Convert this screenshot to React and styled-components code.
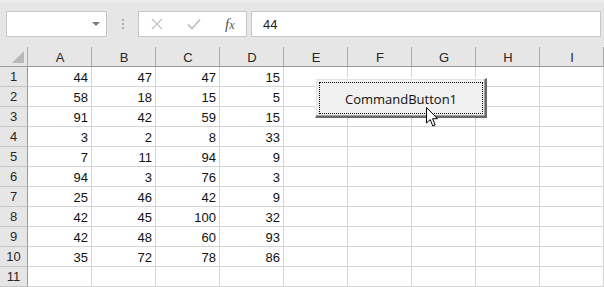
import { styled, createGlobalStyle } from "styled-components";

const GlobalStyle = createGlobalStyle`
  html, body {
    margin: 0;
    padding: 0;
    background: #e6e6e6;
    overflow: hidden;
  }
  body {
    font-family: "Liberation Sans", Arial, sans-serif;
  }
`;

const columns = ["A", "B", "C", "D", "E", "F", "G", "H", "I"];

const data = [
  [44, 47, 47, 15],
  [58, 18, 15, 5],
  [91, 42, 59, 15],
  [3, 2, 8, 33],
  [7, 11, 94, 9],
  [94, 3, 76, 3],
  [25, 46, 42, 9],
  [42, 45, 100, 32],
  [42, 48, 60, 93],
  [35, 72, 78, 86],
  [],
];

export default function App() {
  return (
    <Page>
      <GlobalStyle />
      <FormulaBar>
        <NameBox>
          <DropArrow />
        </NameBox>
        <Grip>
          <span />
          <span />
          <span />
        </Grip>
        <ActionBox>
          <ActionIcon>
            <svg width="12" height="12" viewBox="0 0 12 12">
              <path d="M1 1 L11 11 M11 1 L1 11" stroke="#c2c2c2" strokeWidth="1.4" fill="none" />
            </svg>
          </ActionIcon>
          <ActionIcon>
            <svg width="14" height="12" viewBox="0 0 14 12">
              <path d="M1 6.5 L5 10.5 L13 1.5" stroke="#c2c2c2" strokeWidth="1.8" fill="none" />
            </svg>
          </ActionIcon>
          <Fx>
            f<sub>x</sub>
          </Fx>
        </ActionBox>
        <FormulaInput>44</FormulaInput>
      </FormulaBar>

      <Sheet>
        <Corner>
          <svg width="12" height="12" viewBox="0 0 12 12">
            <path d="M12 0 L12 12 L0 12 Z" fill="#b8b8b8" />
          </svg>
        </Corner>
        {columns.map((c) => (
          <ColHeader key={c}>{c}</ColHeader>
        ))}
        {data.map((row, r) => (
          <Row key={r}>
            <RowHeader>{r + 1}</RowHeader>
            {columns.map((c, i) => (
              <Cell key={c}>{row[i] ?? ""}</Cell>
            ))}
          </Row>
        ))}

        <CommandButton>
          <FocusRect>CommandButton1</FocusRect>
        </CommandButton>
        <Pointer width="13" height="21" viewBox="0 0 13 21">
          <path
            d="M0.5 0.5 L0.5 16 L4.2 12.6 L6.8 19 L9.2 18 L6.6 11.7 L11.5 11.7 Z"
            fill="#fff"
            stroke="#000"
            strokeWidth="1"
            strokeLinejoin="round"
          />
        </Pointer>
      </Sheet>
    </Page>
  );
}

const Page = styled.div`
  width: 604px;
  height: 287px;
  background: #e6e6e6;
  overflow: hidden;
`;

const FormulaBar = styled.div`
  height: 47px;
  box-sizing: border-box;
  padding: 11px 0 0 6px;
  display: flex;
  align-items: flex-start;
  border-top: 2px solid #ececec;
`;

const Box = styled.div`
  height: 26px;
  box-sizing: border-box;
  background: #fff;
  border: 1px solid #c6c6c6;
  display: flex;
  align-items: center;
`;

const NameBox = styled(Box)`
  width: 101px;
  justify-content: flex-end;
  padding-right: 6px;
  margin-top: -2px;
`;

const DropArrow = styled.span`
  width: 0;
  height: 0;
  border-left: 4px solid transparent;
  border-right: 4px solid transparent;
  border-top: 4px solid #7a7a7a;
`;

const Grip = styled.div`
  width: 31px;
  height: 26px;
  margin-top: -2px;
  display: flex;
  flex-direction: column;
  align-items: center;
  justify-content: center;
  gap: 2px;
  span {
    width: 2px;
    height: 2px;
    background: #b0b0b0;
  }
`;

const ActionBox = styled(Box)`
  width: 109px;
  margin-top: -2px;
  padding-left: 12px;
`;

const ActionIcon = styled.div`
  width: 36px;
  display: flex;
  align-items: center;
  justify-content: flex-start;
`;

const Fx = styled.span`
  font-family: "Liberation Serif", "Times New Roman", serif;
  font-style: italic;
  font-size: 15px;
  color: #555;
  margin-left: 2px;
  sub {
    font-size: 12px;
    vertical-align: baseline;
  }
`;

const FormulaInput = styled(Box)`
  width: 350px;
  margin-left: 4px;
  margin-top: -2px;
  padding-left: 11px;
  font-size: 13px;
  color: #222;
`;

const Sheet = styled.div`
  position: relative;
  display: grid;
  grid-template-columns: 28px repeat(9, 64px);
  grid-template-rows: 20px;
  grid-auto-rows: 20px;
  font-size: 13px;
  color: #111;
`;

const Row = styled.div`
  display: contents;
`;

const HeaderCell = styled.div`
  box-sizing: border-box;
  background: #e6e6e6;
  display: flex;
  align-items: center;
  justify-content: center;
  color: #262626;
`;

const Corner = styled(HeaderCell)`
  border-right: 1px solid #ababab;
  border-bottom: 1px solid #9b9b9b;
  align-items: flex-end;
  justify-content: flex-end;
  padding: 0 3px 3px 0;
`;

const ColHeader = styled(HeaderCell)`
  border-bottom: 1px solid #9b9b9b;
  padding-top: 2px;
  background-image: linear-gradient(#ababab, #ababab);
  background-size: 1px 19px;
  background-position: right bottom;
  background-repeat: no-repeat;
`;

const RowHeader = styled(HeaderCell)`
  border-right: 1px solid #9b9b9b;
  border-bottom: 1px solid #c6c6c6;
`;

const Cell = styled.div`
  box-sizing: border-box;
  background: #fff;
  border-right: 1px solid #d4d4d4;
  border-bottom: 1px solid #d4d4d4;
  display: flex;
  align-items: center;
  justify-content: flex-end;
  padding: 1px 3px 0 0;
`;

const CommandButton = styled.div`
  position: absolute;
  left: 315px;
  top: 31px;
  width: 172px;
  height: 40px;
  box-sizing: border-box;
  background: #f0f0f0;
  border-top: 1px solid #fff;
  border-left: 1px solid #fff;
  border-right: 2px solid #696969;
  border-bottom: 2px solid #696969;
  box-shadow: inset -1px -1px 0 #a0a0a0, inset 1px 1px 0 #e3e3e3;
  padding: 3px 2px 2px 3px;
  display: flex;
`;

const FocusRect = styled.div`
  flex: 1;
  border: 1px dotted #000;
  display: flex;
  align-items: center;
  justify-content: center;
  font-family: "Open Sans", "Liberation Sans", sans-serif;
  font-size: 13px;
  color: #111;
  padding-top: 1px;
`;

const Pointer = styled.svg`
  position: absolute;
  left: 426px;
  top: 60px;
`;
